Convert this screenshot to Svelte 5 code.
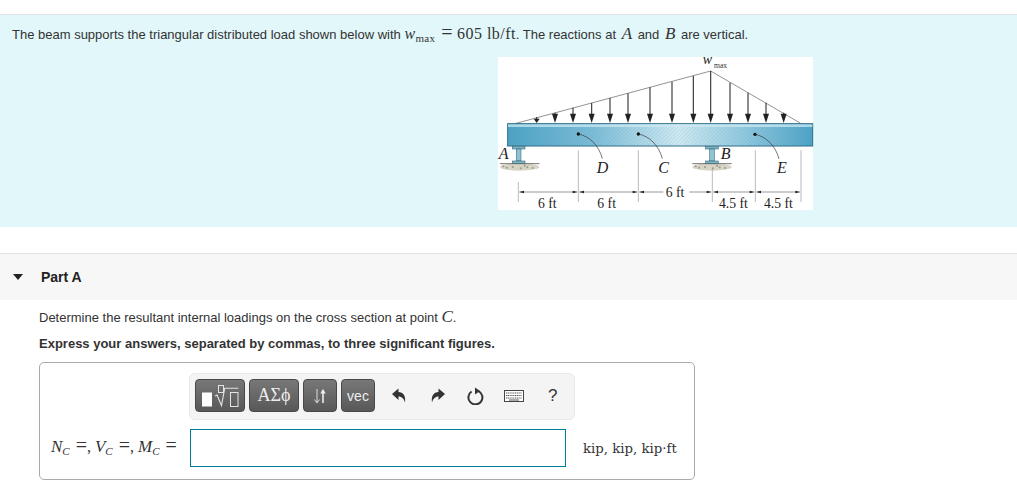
<script>
  const arrows = [[140,207],[195,187],[249,172],[305,158],[360,143],[414,129],[480,111],[546,94],[610,77],[662,62],[720,97],[774,127],[828,157],[881,187]];
  const ticks = [[85,395],[265,300],[445,300],[667,355],[796,300],[933,300]];
  const heads = [[88,1],[262,-1],[268,1],[442,-1],[448,1],[664,-1],[670,1],[793,-1],[799,1],[930,-1]];
  const spans = [[88,262],[268,442],[448,520],[598,664],[670,793],[799,930]];
  const dims = [[172,472,'6 ft'],[350,472,'6 ft'],[555,439,'6 ft'],[730,472,'4.5 ft'],[865,472,'4.5 ft']];
  const curves = [[265,251],[445,251],[795,252]];
  const supports = [[85,30],[665,607]];
  const stones = [[50,352],[68,350],[92,354],[112,351],[128,353],[40,348],[104,346]];
</script>

<main class="page">
  <section class="prompt">
    <p class="intro">The beam supports the triangular distributed load shown below with <span class="math wide"><i>w</i><sub>max</sub><span class="eq">=</span>605 lb/ft</span>. The reactions at <span class="math big"><i>A</i></span> and <span class="math big"><i>B</i></span> are vertical.</p>
    <svg class="figure" viewBox="24 20 945 459" role="img" aria-label="Beam with triangular load">
      <defs>
        <linearGradient id="beamFill" x1="0" x2="1" y1="0" y2="0">
          <stop offset="0" stop-color="#4ea3c6" />
          <stop offset="0.28" stop-color="#7dbdd6" />
          <stop offset="0.56" stop-color="#cfe9f2" />
          <stop offset="0.78" stop-color="#90c8dd" />
          <stop offset="1" stop-color="#4ea3c6" />
        </linearGradient>
        <pattern id="hatch" width="8" height="8" patternUnits="userSpaceOnUse" patternTransform="rotate(45)">
          <line x1="0" y1="0" x2="0" y2="8" stroke="#2f7fa3" stroke-width="3" opacity="0.22" />
        </pattern>
        <filter id="soft"><feGaussianBlur stdDeviation="0.9" /></filter>
      </defs>
      <rect x="24" y="20" width="945" height="459" fill="#fff" />
      <g filter="url(#soft)">
        <polyline points="78,219 662,62 932,219" fill="none" stroke="#777" stroke-width="2.4" />
        {#each arrows as [x, top]}
          <line x1={x} y1={top} x2={x} y2="200" stroke="#333" stroke-width="3.4" />
          <polygon points="{x-9},{x===140?205:190} {x+9},{x===140?205:190} {x},218" fill="#222" />
        {/each}
        <rect x="53" y="220" width="915" height="67" fill="url(#beamFill)" stroke="#2f6d87" stroke-width="3" />
        <rect x="54" y="230" width="913" height="55" fill="url(#hatch)" />
        <rect x="54" y="222" width="913" height="8" fill="#cbe8f2" opacity="0.75" />
        {#each supports as [x, gx]}
          <ellipse cx={gx + 59} cy="350" rx="59" ry="11" fill="#d8d4c4" />
          <line x1={gx} y1="340" x2={gx + 118} y2="340" stroke="#555" stroke-width="2.5" />
          {#each stones as [sx, sy]}
            <circle cx={sx - 30 + gx} cy={sy} r="3" fill="#9a978c" />
          {/each}
          <rect x={x - 18} y="289" width="38" height="7" fill="#7db4c8" stroke="#2f5f70" stroke-width="1.6" />
          <rect x={x - 6} y="296" width="14" height="36" fill="#8fc2d4" stroke="#2f5f70" stroke-width="1.6" />
          <rect x={x - 18} y="332" width="38" height="7" fill="#7db4c8" stroke="#2f5f70" stroke-width="1.6" />
        {/each}
        {#each ticks as [x, top]}
          <line x1={x} y1={top} x2={x} y2="455" stroke="#999" stroke-width="2" />
        {/each}
        {#each spans as [a, b]}
          <line x1={a} y1="425" x2={b} y2="425" stroke="#666" stroke-width="2" />
        {/each}
        {#each heads as [x, d]}
          <polygon points="{x},425 {x+14*d},421 {x+14*d},429" fill="#222" />
        {/each}
        {#each curves as [x, y]}
          <circle cx={x} cy={y} r="5" fill="#111" />
          <path d="M{x} {y} C{x+32} {y+6} {x+62} {y+34} {x+72} {y+74}" fill="none" stroke="#333" stroke-width="2" />
        {/each}
      </g>
      <text class="w" x="638" y="41">w</text>
      <text class="sub" x="672" y="53">max</text>
      <text class="pt" x="26" y="326">A</text>
      <text class="pt" x="692" y="326">B</text>
      <text class="pt" x="320" y="368">D</text>
      <text class="pt" x="505" y="368">C</text>
      <text class="pt" x="861" y="368">E</text>
      {#each dims as [x, y, label]}
        <text class="dim" x={x} y={y}>{label}</text>
      {/each}
    </svg>
  </section>

  <section class="part">
    <header class="part-head">
      <span class="caret"></span>
      <h2>Part A</h2>
    </header>
    <div class="part-body">
      <p class="question">Determine the resultant internal loadings on the cross section at point <span class="math big"><i>C</i></span>.</p>
      <p class="instruction">Express your answers, separated by commas, to three significant figures.</p>
      <div class="answer">
        <div class="toolbar">
          <button class="tool tool-wide" aria-label="Templates">
            <svg width="40" height="26" viewBox="0 0 40 26">
              <rect x="2" y="9.5" width="10" height="14" fill="#fff" />
              <rect x="18.5" y="2.5" width="5" height="7" fill="none" stroke="#e4e4e4" />
              <path d="M15 13l2-1 4.5 10.5 3.2-17.3h13.6" fill="none" stroke="#e4e4e4" stroke-width="1.1" />
              <rect x="30.5" y="9.5" width="7.5" height="14" fill="none" stroke="#e4e4e4" />
            </svg>
          </button>
          <button class="tool tool-wide serif">ΑΣϕ</button>
          <button class="tool tool-small" aria-label="Sub and superscript">
            <svg width="14" height="16" viewBox="0 0 14 16">
              <path d="M4 1V14.5M1.5 11.5L4 15L6.5 11.5" fill="none" stroke="#ddd" stroke-width="1" />
              <path d="M10 15V2" fill="none" stroke="#eee" stroke-width="1.6" />
              <path d="M7.3 5.5L10 1L12.7 5.5Z" fill="#eee" />
            </svg>
          </button>
          <button class="tool tool-small vec">vec</button>
          <div class="actions">
            <svg class="act" viewBox="0 0 16 16" aria-label="Undo"><path d="M1 6L7.5 .5V4C12 4 15 7.5 14 14.5C13 11 11 8.5 7.5 8.5V12Z" fill="#333" /></svg>
            <svg class="act redo" viewBox="0 0 16 16" aria-label="Redo"><path d="M15 6L8.5 .5V4C4 4 1 7.5 2 14.5C3 11 5 8.5 8.5 8.5V12Z" fill="#333" /></svg>
            <svg class="reset" viewBox="0 0 18 18" aria-label="Reset"><path d="M11.5 4.1A7 7 0 1 1 4.6 4.5" fill="none" stroke="#333" stroke-width="2" /><path d="M8 .5L13 4L8 7.5Z" fill="#333" /></svg>
            <svg class="kbd" viewBox="0 0 20 12" aria-label="Keyboard"><rect x="0.5" y="0.5" width="19" height="11" fill="#fff" stroke="#444" /><path d="M2 3h16M2 5.5h16M2 8h16" stroke="#555" stroke-width="1.2" stroke-dasharray="1.2 .6" /><path d="M5 10h10" stroke="#555" /></svg>
            <span class="help">?</span>
          </div>
        </div>
        <div class="entry">
          <span class="label math"><i>N<sub>C</sub></i><span class="eq">=</span>, <i>V<sub>C</sub></i><span class="eq">=</span>, <i>M<sub>C</sub></i><span class="eq">=</span></span>
          <input class="field" type="text" aria-label="Answer" />
          <span class="units">kip, kip, kip·ft</span>
        </div>
      </div>
    </div>
  </section>
</main>

<style>
  :global(body) { margin: 0; background: #fff; }
  .page { font-family: "Liberation Sans", Arial, sans-serif; color: #333; padding-top: 14px; overflow: hidden; height: 475px; }
  p { margin: 0; }
  .math { font-family: "Liberation Serif", serif; font-size: 16px; line-height: 0; }
  .math sub { font-size: 11px; line-height: 0; vertical-align: -3px; }
  .big { font-size: 17px; }
  .intro .big { margin: 0 2px; }
  .wide { letter-spacing: 0.45px; }
  .wide sub { letter-spacing: 0.3px; }
  .eq { margin: 0 4px 0 6px; font-size: 20px; }
  .prompt { height: 212px; background: #e2f7fa; border-top: 1px solid #e2e2e2; position: relative; }
  .intro { font-size: 13px; line-height: 18px; padding: 11px 0 0 12px; height: 31px; }
  .figure { display: block; width: 315px; height: 153px; margin: 0 0 0 498px; overflow: visible; }
  .w { font: italic 42px "Liberation Serif", serif; fill: #222; }
  .sub { font: 23px "Liberation Serif", serif; fill: #333; }
  .pt { font: italic 48px "Liberation Serif", serif; fill: #222; }
  .dim { font: 41px "Liberation Serif", serif; fill: #222; text-anchor: middle; }
  .part { margin-top: 26px; }
  .part-head { display: flex; align-items: center; height: 46px; background: #f7f7f7; border-top: 1px solid #e0e0e0; }
  .caret { width: 0; height: 0; margin: 0 18px 0 13px; border: 5px solid transparent; border-top: 6px solid #222; border-bottom: 0; }
  h2 { margin: 0; font-size: 14px; font-weight: 700; color: #222; }
  .part-body { padding: 0 0 0 39px; }
  .question { font-size: 13px; line-height: 18px; padding-top: 9px; }
  .instruction { font-size: 13px; line-height: 18px; font-weight: 700; padding-top: 8px; }
  .answer { box-sizing: border-box; width: 656px; height: 118px; margin-top: 9px; padding: 10px 0 0 11px; border: 1px solid #aaa; border-radius: 5px; }
  .toolbar { display: flex; align-items: center; gap: 4px; box-sizing: border-box; width: 386px; height: 47px; margin-left: 138px; padding: 0 5px 2px; background: #f4f4f4; border: 1px solid #e9e9e9; border-radius: 6px; }
  .tool { display: flex; align-items: center; justify-content: center; box-sizing: border-box; height: 33px; padding: 0; color: #eee; background: linear-gradient(#787878, #585858); border: 1px solid #484848; border-radius: 4px; }
  .tool-wide { width: 50px; }
  .tool-small { width: 34px; }
  .serif { font: 18px "Liberation Serif", serif; }
  .vec { font: 14px "Liberation Sans", sans-serif; }
  .actions { display: flex; align-items: center; flex: 1; margin-left: 12px; }
  .act { width: 16px; height: 16px; flex: none; }
  .redo { margin-left: 23px; }
  .reset { width: 18px; height: 18px; flex: none; margin-left: 21px; }
  .kbd { width: 20px; height: 12px; flex: none; margin-left: 19px; }
  .help { font-size: 17px; color: #333; margin-left: 24px; }
  .entry { display: flex; align-items: center; margin-top: 9px; height: 38px; }
  .label { width: 139px; white-space: nowrap; }
  .label i { font-size: 17px; }
  .label .eq { margin: 0 0 0 6px; }
  .field { box-sizing: border-box; width: 376px; height: 38px; margin: 0; background: #fff; border: 1px solid #007c9e; border-radius: 0; }
  .units { margin-left: 17px; font: 13.3px "DejaVu Serif", "Liberation Serif", serif; }
</style>
